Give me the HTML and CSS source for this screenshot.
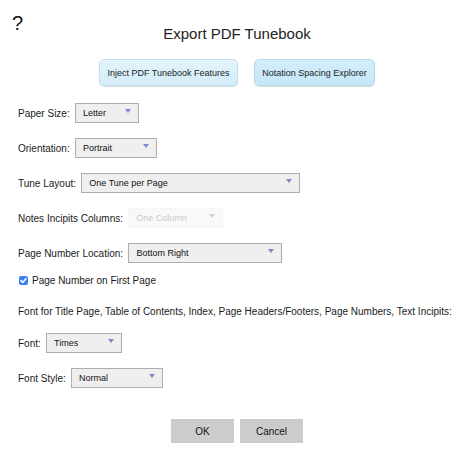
FILE: index.html
```html
<!DOCTYPE html>
<html lang="en">
<head>
<meta charset="utf-8">
<title>Export PDF Tunebook</title>
<link rel="stylesheet" href="styles.css">
</head>
<body>
<div class="dialog">
  <div class="help">?</div>
  <h1 class="title">Export PDF Tunebook</h1>
  <div class="top-actions">
    <button class="feature-btn">Inject PDF Tunebook Features</button>
    <button class="feature-btn feature-btn-alt">Notation Spacing Explorer</button>
  </div>
  <div class="form">
    <div class="row">
      <label class="label">Paper Size:</label>
      <span class="select-wrap w-paper"><select class="select"><option>Letter</option></select></span>
    </div>
    <div class="row">
      <label class="label">Orientation:</label>
      <span class="select-wrap w-orient"><select class="select"><option>Portrait</option></select></span>
    </div>
    <div class="row">
      <label class="label">Tune Layout:</label>
      <span class="select-wrap w-layout"><select class="select"><option>One Tune per Page</option></select></span>
    </div>
    <div class="row">
      <label class="label">Notes Incipits Columns:</label>
      <span class="select-wrap select-wrap-disabled w-columns"><select class="select" disabled><option>One Column</option></select></span>
    </div>
    <div class="row">
      <label class="label">Page Number Location:</label>
      <span class="select-wrap w-pagenum"><select class="select"><option>Bottom Right</option></select></span>
    </div>
    <div class="check-row">
      <span class="checkbox"><svg viewBox="0 0 9 9" width="9" height="9"><path d="M2 4.6 L3.8 6.4 L7 2.6" fill="none" stroke="#fff" stroke-width="1.5" stroke-linecap="round" stroke-linejoin="round"/></svg></span>
      <span class="check-label">Page Number on First Page</span>
    </div>
    <p class="note">Font for Title Page, Table of Contents, Index, Page Headers/Footers, Page Numbers, Text Incipits:</p>
    <div class="row">
      <label class="label">Font:</label>
      <span class="select-wrap w-font"><select class="select"><option>Times</option></select></span>
    </div>
    <div class="row row-last">
      <label class="label">Font Style:</label>
      <span class="select-wrap w-style"><select class="select"><option>Normal</option></select></span>
    </div>
  </div>
  <div class="bottom-actions">
    <button class="plain-btn">OK</button>
    <button class="plain-btn">Cancel</button>
  </div>
</div>
</body>
</html>
```

FILE: styles.css
```css
html, body {
  margin: 0;
  padding: 0;
  background: #ffffff;
}
body {
  font-family: "Liberation Sans", Arial, sans-serif;
  color: #1a1a1a;
}
.dialog {
  position: relative;
  width: 474px;
  height: 460px;
  padding-top: 25px;
  box-sizing: border-box;
}
.help {
  position: absolute;
  left: 12px;
  top: 12px;
  font-size: 20px;
  line-height: 23px;
  color: #111;
}
.title {
  margin: 0;
  font-size: 15px;
  line-height: 18px;
  font-weight: normal;
  text-align: center;
  color: #222;
}
.top-actions {
  display: flex;
  justify-content: center;
  gap: 16px;
  margin-top: 16px;
}
.feature-btn {
  height: 27px;
  padding: 0;
  white-space: nowrap;
  font-family: "Liberation Sans", Arial, sans-serif;
  font-size: 9px;
  color: #1a1a1a;
  background: linear-gradient(#e3f4fc, #d3edf9);
  border: 1px solid #bfe1f1;
  border-radius: 5px;
  box-shadow: 0 1px 1px rgba(0, 0, 0, 0.14);
  box-sizing: border-box;
}
.feature-btn:first-child {
  width: 139px;
}
.feature-btn-alt {
  width: 121px;
  background: linear-gradient(#d2eefb, #c5e7f7);
  border-color: #b3dbef;
}
.form {
  margin-top: 17px;
  padding-left: 18px;
}
.row {
  display: flex;
  align-items: center;
  height: 20px;
  margin-bottom: 15px;
}
.row-last {
  margin-bottom: 0;
}
.label {
  font-size: 10px;
  margin-right: 5.3px;
  white-space: nowrap;
}
.select-wrap {
  position: relative;
  display: block;
  height: 20px;
}
.select-wrap::after {
  content: "";
  position: absolute;
  right: 8px;
  top: 6px;
  width: 0;
  height: 0;
  border-left: 3.5px solid transparent;
  border-right: 3.5px solid transparent;
  border-top: 4px solid #7c89cc;
  pointer-events: none;
}
.select {
  -webkit-appearance: none;
  appearance: none;
  display: block;
  width: 100%;
  height: 20px;
  margin: 0;
  padding: 0 0 0 7px;
  font-family: "Liberation Sans", Arial, sans-serif;
  font-size: 9px;
  color: #111;
  background: #efefef;
  border: 1px solid #aeaeae;
  border-radius: 0;
  box-sizing: border-box;
}
.select-wrap-disabled::after {
  border-top-color: #d4d4d4;
}
.select-wrap-disabled .select {
  background: #f7f7f7;
  border-color: #f1f1f1;
  color: #b3b3b3;
}
.w-paper { width: 64px; }
.w-orient { width: 82px; }
.w-layout { width: 219px; }
.w-columns { width: 95px; }
.w-pagenum { width: 154px; }
.w-font { width: 76px; }
.w-style { width: 92px; }
.check-row {
  display: flex;
  align-items: center;
  height: 16px;
  margin-top: -6px;
}
.checkbox {
  display: block;
  width: 9px;
  height: 9px;
  margin-left: 1px;
  margin-right: 4px;
  background: #3b7ef0;
  border-radius: 2px;
}
.checkbox svg {
  display: block;
}
.check-label {
  font-size: 10px;
}
.note {
  margin: 17px 0 14px 0;
  font-size: 10px;
  line-height: 14px;
  white-space: nowrap;
}
.bottom-actions {
  display: flex;
  justify-content: center;
  gap: 6px;
  margin-top: 31px;
}
.plain-btn {
  width: 63px;
  height: 24px;
  padding: 0;
  font-family: "Liberation Sans", Arial, sans-serif;
  font-size: 10px;
  color: #111;
  background: #cccccc;
  border: none;
  border-radius: 0;
}
```
